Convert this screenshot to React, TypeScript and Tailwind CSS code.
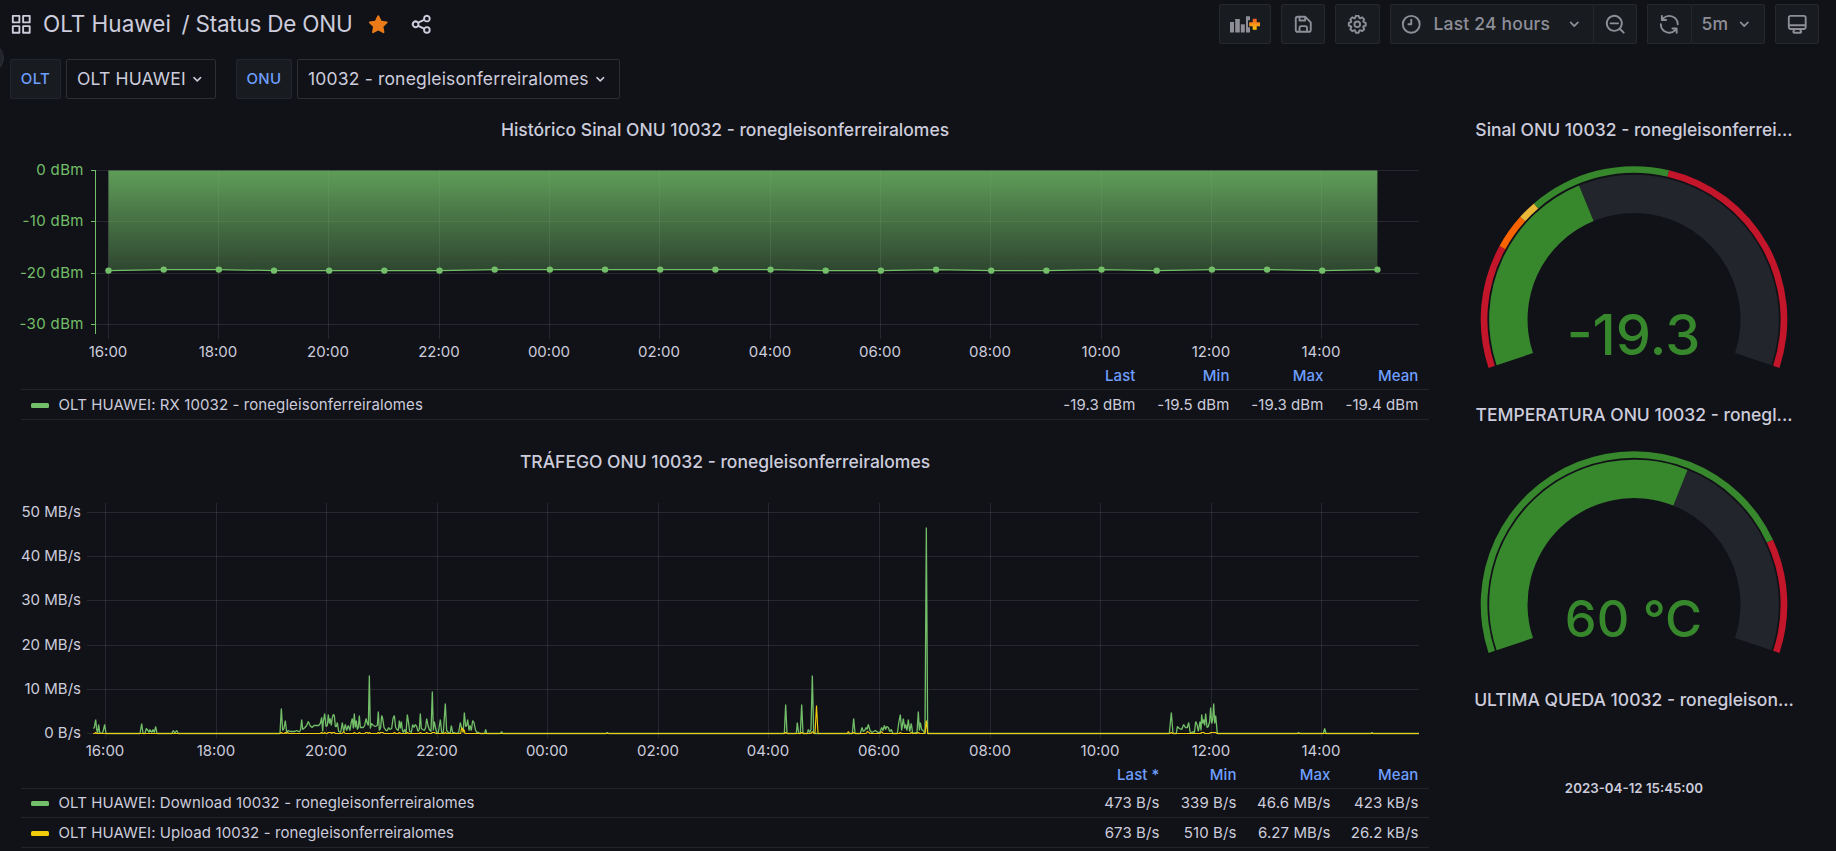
import type { ReactNode } from "react";

const ICONS = {
  apps: "M10,13H3a1,1,0,0,0-1,1v7a1,1,0,0,0,1,1h7a1,1,0,0,0,1-1V14A1,1,0,0,0,10,13ZM9,20H4V15H9ZM21,2H14a1,1,0,0,0-1,1v7a1,1,0,0,0,1,1h7a1,1,0,0,0,1-1V3A1,1,0,0,0,21,2ZM20,9H15V4h5Zm1,4H14a1,1,0,0,0-1,1v7a1,1,0,0,0,1,1h7a1,1,0,0,0,1-1V14A1,1,0,0,0,21,13Zm-1,7H15V15h5ZM10,2H3A1,1,0,0,0,2,3v7a1,1,0,0,0,1,1h7a1,1,0,0,0,1-1V3A1,1,0,0,0,10,2ZM9,9H4V4H9Z",
  star: "M22,9.67A1,1,0,0,0,21.14,9l-5.69-.83L12.9,3a1,1,0,0,0-1.8,0L8.55,8.16,2.86,9a1,1,0,0,0-.81.68,1,1,0,0,0,.25,1l4.13,4-1,5.68A1,1,0,0,0,6.9,21.44L12,18.77l5.1,2.67a.93.93,0,0,0,.46.12,1,1,0,0,0,.59-.19,1,1,0,0,0,.4-1l-1-5.68,4.13-4A1,1,0,0,0,22,9.67Z",
  share: "M18,14a4,4,0,0,0-3.08,1.48l-5.1-2.35a3.64,3.64,0,0,0,0-2.26l5.1-2.35A4,4,0,1,0,14,6a4.17,4.17,0,0,0,.07.71L8.79,9.14a4,4,0,1,0,0,5.72l5.28,2.43A4.17,4.17,0,0,0,14,18a4,4,0,1,0,4-4ZM18,4a2,2,0,1,1-2,2A2,2,0,0,1,18,4ZM6,14a2,2,0,1,1,2-2A2,2,0,0,1,6,14Zm12,6a2,2,0,1,1,2-2A2,2,0,0,1,18,20Z",
  save: "m20.71 9.29-6-6a1 1 0 0 0-.32-.21A1.09 1.09 0 0 0 14 3H6a3 3 0 0 0-3 3v12a3 3 0 0 0 3 3h12a3 3 0 0 0 3-3v-8a1 1 0 0 0-.29-.71ZM9 5h4v2H9Zm6 14H9v-3a1 1 0 0 1 1-1h4a1 1 0 0 1 1 1Zm4-1a1 1 0 0 1-1 1h-1v-3a3 3 0 0 0-3-3h-4a3 3 0 0 0-3 3v3H6a1 1 0 0 1-1-1V6a1 1 0 0 1 1-1h1v3a1 1 0 0 0 1 1h6a1 1 0 0 0 1-1V6.41l4 4Z",
  cog: "M21.32,9.55l-1.89-.63.89-1.78A1,1,0,0,0,20.13,6L18,3.87a1,1,0,0,0-1.15-.19l-1.78.89-.63-1.89A1,1,0,0,0,13.5,2h-3a1,1,0,0,0-.95.68L8.92,4.57,7.14,3.68A1,1,0,0,0,6,3.87L3.87,6a1,1,0,0,0-.19,1.15l.89,1.78-1.89.63A1,1,0,0,0,2,10.5v3a1,1,0,0,0,.68.95l1.89.63-.89,1.78A1,1,0,0,0,3.87,18L6,20.13a1,1,0,0,0,1.15.19l1.78-.89.63,1.89a1,1,0,0,0,.95.68h3a1,1,0,0,0,.95-.68l.63-1.89,1.78.89A1,1,0,0,0,18,20.13L20.13,18a1,1,0,0,0,.19-1.15l-.89-1.78,1.89-.63A1,1,0,0,0,22,13.5v-3A1,1,0,0,0,21.32,9.55ZM20,12.78l-1.2.4A2,2,0,0,0,17.64,16l.57,1.14-1.1,1.1L16,17.64a2,2,0,0,0-2.79,1.16l-.4,1.2H11.22l-.4-1.2A2,2,0,0,0,8,17.64l-1.14.57-1.1-1.1L6.36,16A2,2,0,0,0,5.2,13.18L4,12.78V11.22l1.2-.4A2,2,0,0,0,6.36,8L5.79,6.89l1.1-1.1L8,6.36A2,2,0,0,0,10.82,5.2l.4-1.2h1.56l.4,1.2A2,2,0,0,0,16,6.36l1.14-.57,1.1,1.1L17.64,8a2,2,0,0,0,1.16,2.79l1.2.4ZM12,8a4,4,0,1,0,4,4A4,4,0,0,0,12,8Zm0,6a2,2,0,1,1,2-2A2,2,0,0,1,12,14Z",
  clock: "M12,2A10,10,0,1,0,22,12,10,10,0,0,0,12,2Zm0,18a8,8,0,1,1,8-8A8,8,0,0,1,12,20ZM12,6a1,1,0,0,0-1,1v4H9a1,1,0,0,0,0,2h3a1,1,0,0,0,1-1V7A1,1,0,0,0,12,6Z",
  angleDown: "M17,9.17a1,1,0,0,0-1.41,0L12,12.71,8.46,9.17a1,1,0,0,0-1.41,0,1,1,0,0,0,0,1.42l4.24,4.24a1,1,0,0,0,1.42,0L17,10.59A1,1,0,0,0,17,9.17Z",
  zoomOut: "M21.71,20.29,18,16.61A9,9,0,1,0,16.61,18l3.68,3.68a1,1,0,0,0,1.42,0A1,1,0,0,0,21.71,20.29ZM11,18a7,7,0,1,1,7-7A7,7,0,0,1,11,18Zm4-8H7a1,1,0,0,0,0,2h8a1,1,0,0,0,0-2Z",
  sync: "M19.91,15.51H15.38a1,1,0,0,0,0,2h2.4A8,8,0,0,1,4,12a1,1,0,1,0-2,0,10,10,0,0,0,16.88,7.23V21a1,1,0,0,0,2,0V16.5A1,1,0,0,0,19.91,15.51ZM12,2A10,10,0,0,0,5.12,4.77V3a1,1,0,0,0-2,0V7.5a1,1,0,0,0,1,1h4.5a1,1,0,0,0,0-2H6.22A8,8,0,0,1,20,12a1,1,0,0,0,2,0A10,10,0,0,0,12,2Z",
  monitor: "M19,2H5A3,3,0,0,0,2,5V15a3,3,0,0,0,3,3H7.64l-.58,1a2,2,0,0,0,0,2,2,2,0,0,0,1.75,1h6.46A2,2,0,0,0,17,21a2,2,0,0,0,0-2l-.59-1H19a3,3,0,0,0,3-3V5A3,3,0,0,0,19,2ZM8.77,20,10,18H14l1.2,2ZM20,15a1,1,0,0,1-1,1H5a1,1,0,0,1-1-1V14H20Zm0-3H4V5A1,1,0,0,1,5,4H19a1,1,0,0,1,1,1Z",
};

function Icon({ name, className = "size-[22.5px]" }: { name: keyof typeof ICONS; className?: string }) {
  return (
    <svg viewBox="0 0 24 24" className={`shrink-0 ${className}`} fill="currentColor">
      <path d={ICONS[name]} />
    </svg>
  );
}

function AddPanelIcon() {
  return (
    <svg viewBox="0 0 30 17" className="h-[17px] w-[30px] shrink-0">
      <defs>
        <linearGradient id="plus" x1="0" x2="0" y1="0" y2="1">
          <stop offset="0" stopColor="#f05a28" />
          <stop offset="1" stopColor="#fbca0a" />
        </linearGradient>
      </defs>
      <g fill="#8e8e99">
        <path d="M0 6h4v10.500H0z" />
        <path d="M5.200 3h4.600v13.500H5.200z" />
        <path d="M10.800 8.300h4v8.200h-4z" />
        <path d="M16 0.300h4v4h-2v7h2v5.200h-4z" />
      </g>
      <path d="M22.700 2.800h4v3.500H30v4h-3.300v3.500h-4v-3.500h-3.500v-4h3.500z" fill="url(#plus)" />
    </svg>
  );
}

function ToolButton({ className, children }: { className: string; children: ReactNode }) {
  return (
    <button
      className={`flex h-10 items-center justify-center rounded-[2px] border border-[#26282e] bg-[#181b1f] text-[#8e8e99] ${className}`}
    >
      {children}
    </button>
  );
}

function Header() {
  return (
    <header className="flex h-[49px] items-start justify-between pt-1 pr-[17px] pl-[10px]">
      <div className="flex h-10 items-center">
        <Icon name="apps" />
        <h1 className="ml-[10.5px] flex text-[22.5px] leading-none whitespace-pre">
          <span className="w-[138.5px]">OLT Huawei</span>
          <span className="tracking-[-0.010em]">/ Status De ONU</span>
        </h1>
        <Icon name="star" className="ml-[14.5px] size-[22.5px] text-[#eb7b18]" />
        <Icon name="share" className="ml-[20px] size-[22.5px]" />
      </div>
      <div className="flex gap-[10px]">
        <ToolButton className="w-[52px]">
          <AddPanelIcon />
        </ToolButton>
        <ToolButton className="w-11">
          <Icon name="save" />
        </ToolButton>
        <ToolButton className="w-[45px]">
          <Icon name="cog" />
        </ToolButton>
        <div className="flex">
          <ToolButton className="w-[203px] rounded-r-none border-r-0">
            <Icon name="clock" />
            <span className="ml-[11px] w-[118px] text-left text-[17.500px] font-medium tracking-[0.010em]">Last 24 hours</span>
            <Icon name="angleDown" className="ml-[12px] size-[20.5px]" />
          </ToolButton>
          <ToolButton className="w-11 rounded-l-none">
            <Icon name="zoomOut" />
          </ToolButton>
        </div>
        <div className="flex">
          <ToolButton className="w-[44px] rounded-r-none border-r-0">
            <Icon name="sync" />
          </ToolButton>
          <ToolButton className="w-[74px] rounded-l-none">
            <span className="text-[17.500px] font-medium tracking-[0.010em]">5m</span>
            <Icon name="angleDown" className="ml-[6px] size-[20.5px]" />
          </ToolButton>
        </div>
        <ToolButton className="w-11">
          <Icon name="monitor" />
        </ToolButton>
      </div>
    </header>
  );
}

function Variable({ label, labelClass, value, valueClass }: { label: string; labelClass: string; value: string; valueClass: string }) {
  return (
    <div className="flex gap-[5px]">
      <div
        className={`flex h-10 items-center justify-center rounded-[2px] border border-[#22252b] bg-[#181b1f] text-[15px] font-medium tracking-[0.020em] text-[#6e9fff] ${labelClass}`}
      >
        {label}
      </div>
      <div className={`flex h-10 items-center rounded-[2px] border border-[#2c2e34] pl-[10px] text-[17.5px] tracking-[0.010em] ${valueClass}`}>
        <span>{value}</span>
        <Icon name="angleDown" className="ml-[2px] size-[18.5px]" />
      </div>
    </div>
  );
}

function PanelTitle({ children, className = "" }: { children: ReactNode; className?: string }) {
  return (
    <h2 className={`flex h-10 items-center justify-center pt-[2px] text-[17.500px] font-medium whitespace-nowrap ${className}`}>
      {children}
    </h2>
  );
}

function GridLines({ xs, ys, x0, top, bottom }: { xs: number[]; ys: number[]; x0: number; top: number; bottom: number }) {
  return (
    <g stroke="#ccccdc" strokeOpacity="0.12" shapeRendering="crispEdges">
      {xs.map((x) => (
        <line key={`x${x}`} x1={x} x2={x} y1={top} y2={bottom} />
      ))}
      {ys.map((y) => (
        <line key={`y${y}`} x1={x0} x2={1419} y1={y} y2={y} />
      ))}
    </g>
  );
}

const HOURS = ["16:00", "18:00", "20:00", "22:00", "00:00", "02:00", "04:00", "06:00", "08:00", "10:00", "12:00", "14:00"];

const SIGNAL_XS = [108.5, 218.5, 328.5, 439.5, 549.5, 659.5, 770.5, 880.5, 990.5, 1101.5, 1211.5, 1321.5];
const SIGNAL = [19.5, 19.3, 19.3, 19.5, 19.5, 19.5, 19.5, 19.3, 19.3, 19.3, 19.3, 19.3, 19.3, 19.5, 19.5, 19.3, 19.5, 19.5, 19.3, 19.5, 19.3, 19.3, 19.5, 19.3];

function SignalChart() {
  const points = SIGNAL.map((v, i) => [108.5 + i * 55.17, v === 19.5 ? 270.6 : 269.6]);
  const line = points.map(([x, y]) => `${x},${y}`).join(" ");
  const last = points[points.length - 1][0];
  const ticks: [string, number][] = [["0 dBm", 170.5], ["-10 dBm", 221.5], ["-20 dBm", 273.5], ["-30 dBm", 324.5]];
  return (
    <svg viewBox="11 149 1418 216" className="block h-[216px] w-[1418px]" fontSize="15">
      <defs>
        <linearGradient id="rx" gradientUnits="userSpaceOnUse" x1="0" x2="0" y1="170" y2="271">
          <stop offset="0" stopColor="#73bf69" stopOpacity="0.8" />
          <stop offset="1" stopColor="#73bf69" stopOpacity="0.3" />
        </linearGradient>
      </defs>
      <GridLines xs={SIGNAL_XS} ys={ticks.map((t) => t[1])} x0={91} top={170} bottom={339} />
      <polygon points={`108.500,170.500 ${line} ${last},170.500`} fill="url(#rx)" />
      <polyline points={line} fill="none" stroke="#73bf69" strokeWidth="1.250" />
      {points.map(([x, y]) => (
        <circle key={x} cx={x} cy={y} r="3.200" fill="#73bf69" />
      ))}
      <g stroke="#73bf69" shapeRendering="crispEdges">
        <line x1="95.500" x2="95.500" y1="170" y2="334" />
        {ticks.map(([label, y]) => (
          <line key={label} x1="91" x2="96" y1={y} y2={y} />
        ))}
      </g>
      <g fill="#73bf69" textAnchor="end" letterSpacing="0.35">
        {ticks.map(([label, y]) => (
          <text key={label} x="83.800" y={y + 4.5}>{label}</text>
        ))}
      </g>
      <g fill="#ccccdc" textAnchor="middle">
        {HOURS.map((h, i) => (
          <text key={h} x={SIGNAL_XS[i] - 0.5} y="357">{h}</text>
        ))}
      </g>
    </svg>
  );
}

const TRAFFIC_XS = [105.5, 216.5, 326.5, 437.5, 547.5, 658.5, 768.5, 879.5, 990.5, 1100.5, 1211.5, 1321.5];

/* Samples are "offset:height" pairs; offsets are thirds of a pixel from the segment origin. */
const DOWNLOAD: { origin: number; samples: string }[] = [
  { origin: 0, samples: "280:5 283:6 287:14 290:4 293:.5 296:9 299:1 303:.5 307:0 310:3 314:9 318:0 420:0 425:10 429:0 435:0 439:5 444:3 447:1 450:4 455:1 459:4 463:1 467:7 471:0 516:0 520:3 525:.5 530:3 535:0" },
  { origin: 270, samples: "30:0 34:25 38:3 42:5 46:13 50:1 55:3 60:2 75:2 80:3 88:1.5 92:4 95:14 98:4 105:6 110:8 115:12 120:8 126:6 132:8 140:8 146:8 151:10 155:16 158:2 160:12 164:20 168:7 172:8 175:19 178:10 181:15 184:8 187:16 190:19 193:18 196:7 199:7 202:11 206:2 212:1 217:11 221:2 226:9 230:3 235:8 240:3 243:10 247:15 250:5 253:20 256:6 259:13 262:4 265:6 268:18 271:6 275:6 280:6 284:8 288:15 292:10 295:8 298:58 301:5 304:10 310:8 316:7 322:8 325:22 328:3 332:6 335:18 338:15 342:6 348:3 352:3 356:6 360:4 365:5 369:15 373:18 377:6 381:4 385:3 388:13 391:5 394:12 397:4 400:1 404:4 408:0 412:19 416:10 419:2 424:1 428:9 432:6 436:9 440:7 444:2 448:4 451:20 454:5 458:4 463:3 467:6 470:15 474:8 478:4 483:2 487:42 490:3 493:12 497:5 500:1 505:1 511:14 515:1 520:1 526:30 530:3 536:.5 541:1 544:8 548:1 560:0 566:1 571:11 575:5 580:3 583:21 587:7 590:8 593:14 597:3 600:8 604:3 608:13 612:11 616:4 620:1 626:1 630:0 644:0 647:4 650:0 691:0 695:2 698:0" },
  { origin: 606, samples: "0:0 4:1 8:0" },
  { origin: 760, samples: "73:0 77:29 81:0 109:0 112:11 116:0 121:0 125:29 129:0 142:0 145:4 149:1 153:4 157:58 161:1 165:0 277:0 281:15 285:0 301:0 306:6 310:2 314:3 318:6 321:4 325:9 330:3 336:1 346:3 354:1 360:1 365:6 369:3 373:8 377:4 380:7 385:6 389:2 394:4 398:0 412:0 416:10 421:19 425:3 430:15 434:5 437:9 441:3 445:14 449:2 454:10 458:0 471:1 475:22 478:3 481:11 485:4 489:3 495:0 499:206 503:0" },
  { origin: 1000, samples: "508:0 514:21 519:0 529:0 532:7 538:5 545:4 551:9 556:6 562:6 566:11 571:0 580:2 583:0 587:12 591:9 595:2 600:12 603:3 605:19 608:10 611:14 614:8 617:20 621:6 625:7 629:12 632:26 635:10 638:14 641:30 644:10 647:18 652:0 893:0 896:1 899:0 970:0 974:5 978:0 1113:0 1116:1 1119:0 1257:0" },
];

const UPLOAD: { origin: number; samples: string }[] = [
  { origin: 0, samples: "280:0 284:0 287:1 291:0" },
  { origin: 270, samples: "31:0 34:1 38:0 43:0 46:1 49:0 53:1 57:0 151:0 155:1 158:0 161:0 164:1 168:0 172:0 175:1 182:1 185:0 188:1 193:1 196:0 217:0 221:2 225:0 250:0 253:1 257:0 265:0 268:1 272:0 285:0 288:1 291:1 295:0 298:1 302:0 322:0 325:1 329:0 332:1 338:1 342:0 370:0 373:1 377:0 385:0 388:1 392:0 409:0 412:1 416:0 448:0 451:1 455:0 467:0 470:1 474:0 484:0 487:1 493:1 497:0 523:0 526:1 530:0 572:0 575:6 577:5 579:1 581:4 583:3 585:0" },
  { origin: 760, samples: "73:0 77:1 81:0 121:0 125:1 129:0 153:0 157:2 161:0 165:0 169.500:28 174:0 262:0 265:2 269:0 277:0 281:1 285:0 318:0 322:2 327:1 330:0 361:0 365:2 369:0 418:0 421:1 425:0 451:0 454:1 458:0 471:0 475:1 479:0 495:0 499:13 503:0" },
  { origin: 1000, samples: "510:0 514:1 518:0 602:0 605:1 611:1 615:0 628:0 632:1 638:1 647:1 651:0 1257:0" },
];

function toPoints(segments: { origin: number; samples: string }[], base: number) {
  return segments
    .flatMap(({ origin, samples }) =>
      samples.split(" ").map((s) => {
        const [dx, h] = s.split(":").map(Number);
        return `${(origin + dx / 3).toFixed(2)},${(base - h).toFixed(2)}`;
      }),
    )
    .join(" ");
}

function TrafficChart() {
  const ticks: [string, number][] = [["50 MB/s", 512.5], ["40 MB/s", 556.5], ["30 MB/s", 600.5], ["20 MB/s", 645.5], ["10 MB/s", 689.5], ["0 B/s", 733.5]];
  return (
    <svg viewBox="11 482 1418 282" className="block h-[282px] w-[1418px]" fontSize="15">
      <GridLines xs={TRAFFIC_XS} ys={ticks.map((t) => t[1])} x0={87} top={503} bottom={738} />
      <polyline points={toPoints(DOWNLOAD, 733.5)} fill="none" stroke="#73bf69" strokeWidth="1.300" strokeLinejoin="bevel" />
      <polyline points={toPoints(UPLOAD, 733.5)} fill="none" stroke="#f2cc0c" strokeWidth="1.150" strokeLinejoin="bevel" />
      <g fill="#ccccdc" textAnchor="end">
        {ticks.map(([label, y]) => (
          <text key={label} x="81" y={y + 4.5}>{label}</text>
        ))}
      </g>
      <g fill="#ccccdc" textAnchor="middle">
        {HOURS.map((h, i) => (
          <text key={h} x={TRAFFIC_XS[i] - 0.5} y="756">{h}</text>
        ))}
      </g>
    </svg>
  );
}

function Legend({ cols, heads, rows }: { cols: string; heads: string[]; rows: { label: string; swatch: string; height: string; values: string[] }[] }) {
  return (
    <div className="ml-[10px] w-[1408px] text-[15px] tracking-[0.006em]">
      <div className={`grid h-6 items-center pb-[3px] text-right text-[#6e9fff] ${cols}`}>
        <span />
        {heads.map((h) => (
          <span key={h} className="pr-[10.5px] font-medium">{h}</span>
        ))}
      </div>
      {rows.map((r) => (
        <div key={r.label} className={`grid items-center border-t border-[#22242a] text-right last:border-b ${cols} ${r.height}`}>
          <div className="flex items-center gap-[9.5px] pl-[10px]">
            <span className={`h-[5px] w-[18px] rounded-[1.5px] ${r.swatch}`} />
            <span>{r.label}</span>
          </div>
          {r.values.map((v, i) => (
            <span key={i} className="pr-[10.5px]">{v}</span>
          ))}
        </div>
      ))}
    </div>
  );
}

const CX = 165;
const CY = 170.5;

/* The dial covers slightly more than 216 degrees, opening downwards. */
function dialArc(from: number, to: number, inner: number, outer: number) {
  const at = (f: number, r: number) => {
    const a = ((161.6 + f * 216.8) * Math.PI) / 180;
    return `${(CX + r * Math.cos(a)).toFixed(2)} ${(CY + r * Math.sin(a)).toFixed(2)}`;
  };
  const large = (to - from) * 216.8 > 180 ? 1 : 0;
  return `M${at(from, outer)}A${outer} ${outer} 0 ${large} 1 ${at(to, outer)}L${at(to, inner)}A${inner} ${inner} 0 ${large} 0 ${at(from, inner)}Z`;
}

function Gauge({ value, size, weight, y, fraction, bands }: { value: string; size: number; weight: number; y: number; fraction: number; bands: [number, number, string][] }) {
  return (
    <svg viewBox="0 0 330 230" className="block h-[230px] w-[330px]">
      <path d={dialArc(0, 1, 106.5, 144.8)} fill="#22252b" />
      <path d={dialArc(0, fraction, 106.5, 144.8)} fill="#37872d" />
      {bands.map(([a, b, color]) => (
        <path key={a} d={dialArc(a, b, 146.6, 153.3)} fill={color} />
      ))}
      <text x="164.500" y={y} fontSize={size} fontWeight={weight} textAnchor="middle" fill="#37872d">{value}</text>
    </svg>
  );
}

export default function App() {
  return (
    <div className="relative h-[851px] w-[1836px] overflow-hidden bg-[#111217] font-['Inter',sans-serif] text-[#ccccdc]">
      <div className="absolute top-[43px] left-[-26px] size-[30px] rounded-full border border-[#2c2e34] bg-[#22252b]" />
      <Header />
      <div className="flex gap-5 pt-[10px] pl-[10px]">
        <Variable label="OLT" labelClass="w-[51px]" value="OLT HUAWEI" valueClass="w-[150px]" />
        <Variable label="ONU" labelClass="w-[56px]" value="10032 - ronegleisonferreiralomes" valueClass="w-[323px]" />
      </div>
      <main className="flex pt-[10px] pl-[11px]">
        <div className="flex w-[1428px] flex-col">
          <section className="h-[332px]">
            <PanelTitle>Histórico Sinal ONU 10032 - ronegleisonferreiralomes</PanelTitle>
            <SignalChart />
            <Legend
              cols="grid-cols-[1fr_110px_94px_94px_95px]"
              heads={["Last", "Min", "Max", "Mean"]}
              rows={[
                {
                  label: "OLT HUAWEI: RX 10032 - ronegleisonferreiralomes",
                  swatch: "bg-[#73bf69]",
                  height: "h-[31px] pt-px",
                  values: ["-19.3 dBm", "-19.5 dBm", "-19.3 dBm", "-19.4 dBm"],
                },
              ]}
            />
          </section>
          <section>
            <PanelTitle className="mb-px">TRÁFEGO ONU 10032 - ronegleisonferreiralomes</PanelTitle>
            <TrafficChart />
            <Legend
              cols="grid-cols-[1fr_110px_77px_94px_88px]"
              heads={["Last *", "Min", "Max", "Mean"]}
              rows={[
                {
                  label: "OLT HUAWEI: Download 10032 - ronegleisonferreiralomes",
                  swatch: "bg-[#73bf69]",
                  height: "h-[29px]",
                  values: ["473 B/s", "339 B/s", "46.6 MB/s", "423 kB/s"],
                },
                {
                  label: "OLT HUAWEI: Upload 10032 - ronegleisonferreiralomes",
                  swatch: "bg-[#f2cc0c]",
                  height: "h-[31px] pt-px",
                  values: ["673 B/s", "510 B/s", "6.27 MB/s", "26.2 kB/s"],
                },
              ]}
            />
          </section>
        </div>
        <div className="flex w-[390px] flex-col items-center">
          <section className="flex h-[285px] flex-col items-center">
            <PanelTitle>Sinal ONU 10032 - ronegleisonferrei...</PanelTitle>
            <Gauge
              value="-19.3"
              size={56}
              weight={500}
              y={206}
              fraction={0.397}
              bands={[[0, 0.217, "#c4162a"], [0.217, 0.279, "#fa6400"], [0.279, 0.312, "#eab839"], [0.312, 0.561, "#37872d"], [0.561, 1, "#c4162a"]]}
            />
          </section>
          <section className="flex h-[285px] flex-col items-center">
            <PanelTitle>TEMPERATURA ONU 10032 - ronegl...</PanelTitle>
            <Gauge value="60 °C" size={50.5} weight={450} y={203} fraction={0.6} bands={[[0, 0.8, "#37872d"], [0.8, 1, "#c4162a"]]} />
          </section>
          <section className="flex flex-col items-center">
            <PanelTitle>ULTIMA QUEDA 10032 - ronegleison...</PanelTitle>
            <p className="mt-[59px] text-[13.300px] leading-5 font-semibold">2023-04-12 15:45:00</p>
          </section>
        </div>
      </main>
    </div>
  );
}
